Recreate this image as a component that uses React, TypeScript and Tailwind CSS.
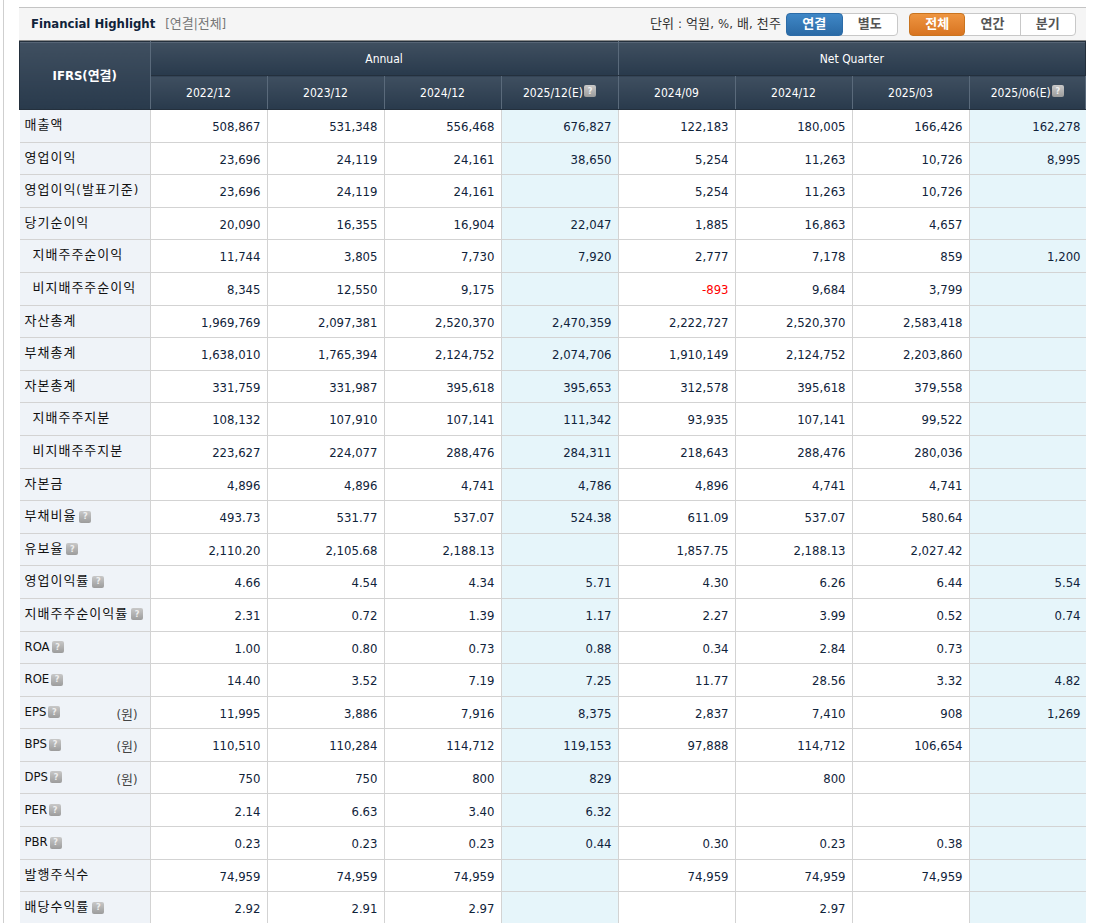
const fontStack = '[font-family:"DejaVu_Sans_Condensed","DejaVu_Sans","Noto_Sans_CJK_KR",sans-serif]';

type Row = {
    label: string;
    cells: string[];
    indent?: boolean;
    help?: boolean;
    unit?: boolean;
    latin?: boolean;
};

const rows: Row[] = [
    { label: "매출액", cells: ["508,867", "531,348", "556,468", "676,827", "122,183", "180,005", "166,426", "162,278"] },
    { label: "영업이익", cells: ["23,696", "24,119", "24,161", "38,650", "5,254", "11,263", "10,726", "8,995"] },
    { label: "영업이익(발표기준)", cells: ["23,696", "24,119", "24,161", "", "5,254", "11,263", "10,726", ""] },
    { label: "당기순이익", cells: ["20,090", "16,355", "16,904", "22,047", "1,885", "16,863", "4,657", ""] },
    { label: "지배주주순이익", indent: true, cells: ["11,744", "3,805", "7,730", "7,920", "2,777", "7,178", "859", "1,200"] },
    { label: "비지배주주순이익", indent: true, cells: ["8,345", "12,550", "9,175", "", "-893", "9,684", "3,799", ""] },
    { label: "자산총계", cells: ["1,969,769", "2,097,381", "2,520,370", "2,470,359", "2,222,727", "2,520,370", "2,583,418", ""] },
    { label: "부채총계", cells: ["1,638,010", "1,765,394", "2,124,752", "2,074,706", "1,910,149", "2,124,752", "2,203,860", ""] },
    { label: "자본총계", cells: ["331,759", "331,987", "395,618", "395,653", "312,578", "395,618", "379,558", ""] },
    { label: "지배주주지분", indent: true, cells: ["108,132", "107,910", "107,141", "111,342", "93,935", "107,141", "99,522", ""] },
    { label: "비지배주주지분", indent: true, cells: ["223,627", "224,077", "288,476", "284,311", "218,643", "288,476", "280,036", ""] },
    { label: "자본금", cells: ["4,896", "4,896", "4,741", "4,786", "4,896", "4,741", "4,741", ""] },
    { label: "부채비율", help: true, cells: ["493.73", "531.77", "537.07", "524.38", "611.09", "537.07", "580.64", ""] },
    { label: "유보율", help: true, cells: ["2,110.20", "2,105.68", "2,188.13", "", "1,857.75", "2,188.13", "2,027.42", ""] },
    { label: "영업이익률", help: true, cells: ["4.66", "4.54", "4.34", "5.71", "4.30", "6.26", "6.44", "5.54"] },
    { label: "지배주주순이익률", help: true, cells: ["2.31", "0.72", "1.39", "1.17", "2.27", "3.99", "0.52", "0.74"] },
    { label: "ROA", help: true, latin: true, cells: ["1.00", "0.80", "0.73", "0.88", "0.34", "2.84", "0.73", ""] },
    { label: "ROE", help: true, latin: true, cells: ["14.40", "3.52", "7.19", "7.25", "11.77", "28.56", "3.32", "4.82"] },
    { label: "EPS", help: true, latin: true, unit: true, cells: ["11,995", "3,886", "7,916", "8,375", "2,837", "7,410", "908", "1,269"] },
    { label: "BPS", help: true, latin: true, unit: true, cells: ["110,510", "110,284", "114,712", "119,153", "97,888", "114,712", "106,654", ""] },
    { label: "DPS", help: true, latin: true, unit: true, cells: ["750", "750", "800", "829", "", "800", "", ""] },
    { label: "PER", help: true, latin: true, cells: ["2.14", "6.63", "3.40", "6.32", "", "", "", ""] },
    { label: "PBR", help: true, latin: true, cells: ["0.23", "0.23", "0.23", "0.44", "0.30", "0.23", "0.38", ""] },
    { label: "발행주식수", cells: ["74,959", "74,959", "74,959", "", "74,959", "74,959", "74,959", ""] },
    { label: "배당수익률", help: true, cells: ["2.92", "2.91", "2.97", "", "", "2.97", "", ""] },
];

const periods = ["2022/12", "2023/12", "2024/12", "2025/12(E)", "2024/09", "2024/12", "2025/03", "2025/06(E)"];

const HelpIcon = ({ className }: { className: string }) => (
    <span
        className={`inline-flex h-[12px] w-[12px] items-center justify-center rounded-[2px] bg-gradient-to-b from-[#c8c8c8] to-[#9c9c9c] text-[9px] leading-none font-bold tracking-normal text-[#eeeeee] ${className}`}
    >
        ?
    </span>
);

const Segment = ({ label, active, color }: { label: string; active?: boolean; color?: string }) => (
    <span
        className={`flex flex-1 items-center justify-center text-[13px] font-bold ${active ? `-my-px -ml-px rounded-[4px] border ${color}` : "text-[#555555]"}`}
    >
        {label}
    </span>
);

export default function App() {
    return (
        <div className={`h-[923px] overflow-hidden bg-white text-[13px] text-[#10233a] ${fontStack}`}>
            <div className="ml-[3px] h-full border-l border-[#cfcfcf] pt-[7px] pr-[13px] pl-[15px]">
                <section>
                    <div className="flex h-[34px] items-center justify-between border-t border-b border-t-[#c4c4c4] border-b-[#8d8d8d] bg-[#f5f5f5] pr-[10px] pl-[12px]">
                        <div className="flex items-center">
                            <h2 className="text-[13px] font-bold text-[#10233a]">Financial Highlight</h2>
                            <span className="ml-[10px] text-[13px] text-[#777777]">[연결|전체]</span>
                        </div>
                        <div className="flex items-center">
                            <span className="mr-[5px] text-[13px] tracking-[0.15px] text-[#333333]">단위 : 억원, %, 배, 천주</span>
                            <div className="flex h-[23px] w-[112px] rounded-[4px] border border-[#c8c8c8] bg-white">
                                <Segment label="연결" active color="border-[#2c6ca8] bg-gradient-to-b from-[#3f87c6] to-[#2a6aa6] text-white" />
                                <Segment label="별도" />
                            </div>
                            <div className="ml-[11px] flex h-[23px] w-[167px] rounded-[4px] border border-[#c8c8c8] bg-white">
                                <Segment label="전체" active color="border-[#c9741f] bg-gradient-to-b from-[#ee9540] to-[#d87420] text-white" />
                                <div className="flex flex-1 border-r border-[#c8c8c8]">
                                    <Segment label="연간" />
                                </div>
                                <Segment label="분기" />
                            </div>
                        </div>
                    </div>
                    <table className="w-[1066px] table-fixed border-collapse">
                        <colgroup>
                            <col className="w-[130.5px]" />
                            {periods.map((period, index) => (
                                <col key={index} className={index === 7 ? "w-[116.5px]" : "w-[117px]"} />
                            ))}
                        </colgroup>
                        <thead>
                            <tr className="h-[34px]">
                                <th
                                    rowSpan={2}
                                    className="border border-[#24303d] border-r-[#5a6a7b] bg-gradient-to-b from-[#3f4f60] to-[#293a4c] text-[13px] font-bold text-white shadow-[inset_0_1px_0_#566475]"
                                >
                                    IFRS(연결)
                                </th>
                                <th
                                    colSpan={4}
                                    className="border border-[#24303d] border-r-[#5a6a7b] bg-gradient-to-b from-[#3f4f60] to-[#293a4c] text-[12px] font-normal text-white shadow-[inset_0_1px_0_#566475]"
                                >
                                    Annual
                                </th>
                                <th
                                    colSpan={4}
                                    className="border border-[#24303d] bg-gradient-to-b from-[#3f4f60] to-[#293a4c] text-[12px] font-normal text-white shadow-[inset_0_1px_0_#566475]"
                                >
                                    Net Quarter
                                </th>
                            </tr>
                            <tr className="h-[34px]">
                                {periods.map((period, index) => (
                                    <th
                                        key={index}
                                        className="border border-[#5a6a7b] border-b-[#24303d] bg-gradient-to-b from-[#3f4f60] to-[#293a4c] text-[12px] font-normal whitespace-nowrap text-white"
                                    >
                                        {period}
                                        {period.endsWith("(E)") && <HelpIcon className="ml-[1px] align-[3px]" />}
                                    </th>
                                ))}
                            </tr>
                        </thead>
                        <tbody>
                            {rows.map((row) => (
                                <tr key={row.label} className="h-[32.6px]">
                                    <td
                                        className={`border-r border-b border-[#d3d3d3] bg-[#eff3f8] pr-[12px] pb-[2px] text-[13px] whitespace-nowrap text-[#111111] ${row.indent ? "pl-[13px]" : "pl-[5px]"}`}
                                    >
                                        <div className="flex items-start justify-between">
                                            <span className={row.latin ? "" : "tracking-[1px]"}>
                                                {row.label}
                                                {row.help && (
                                                    <HelpIcon className={row.latin ? "ml-[2px] align-[1px]" : "ml-[3px] align-[1px]"} />
                                                )}
                                            </span>
                                            {row.unit && <span className="-mb-[3px] pt-[3px] text-[#444444]">(원)</span>}
                                        </div>
                                    </td>
                                    {row.cells.map((cell, index) => (
                                        <td
                                            key={index}
                                            className={`border-b border-[#d3d3d3] pt-[2px] text-right text-[13px] ${index === 7 ? "pr-[5px]" : "border-r pr-[6px]"} ${index === 3 || index === 7 ? "bg-[#e6f5fa]" : "bg-white"} ${cell.startsWith("-") ? "text-[#ff0000]" : ""}`}
                                        >
                                            {cell}
                                        </td>
                                    ))}
                                </tr>
                            ))}
                        </tbody>
                    </table>
                </section>
            </div>
        </div>
    );
}
